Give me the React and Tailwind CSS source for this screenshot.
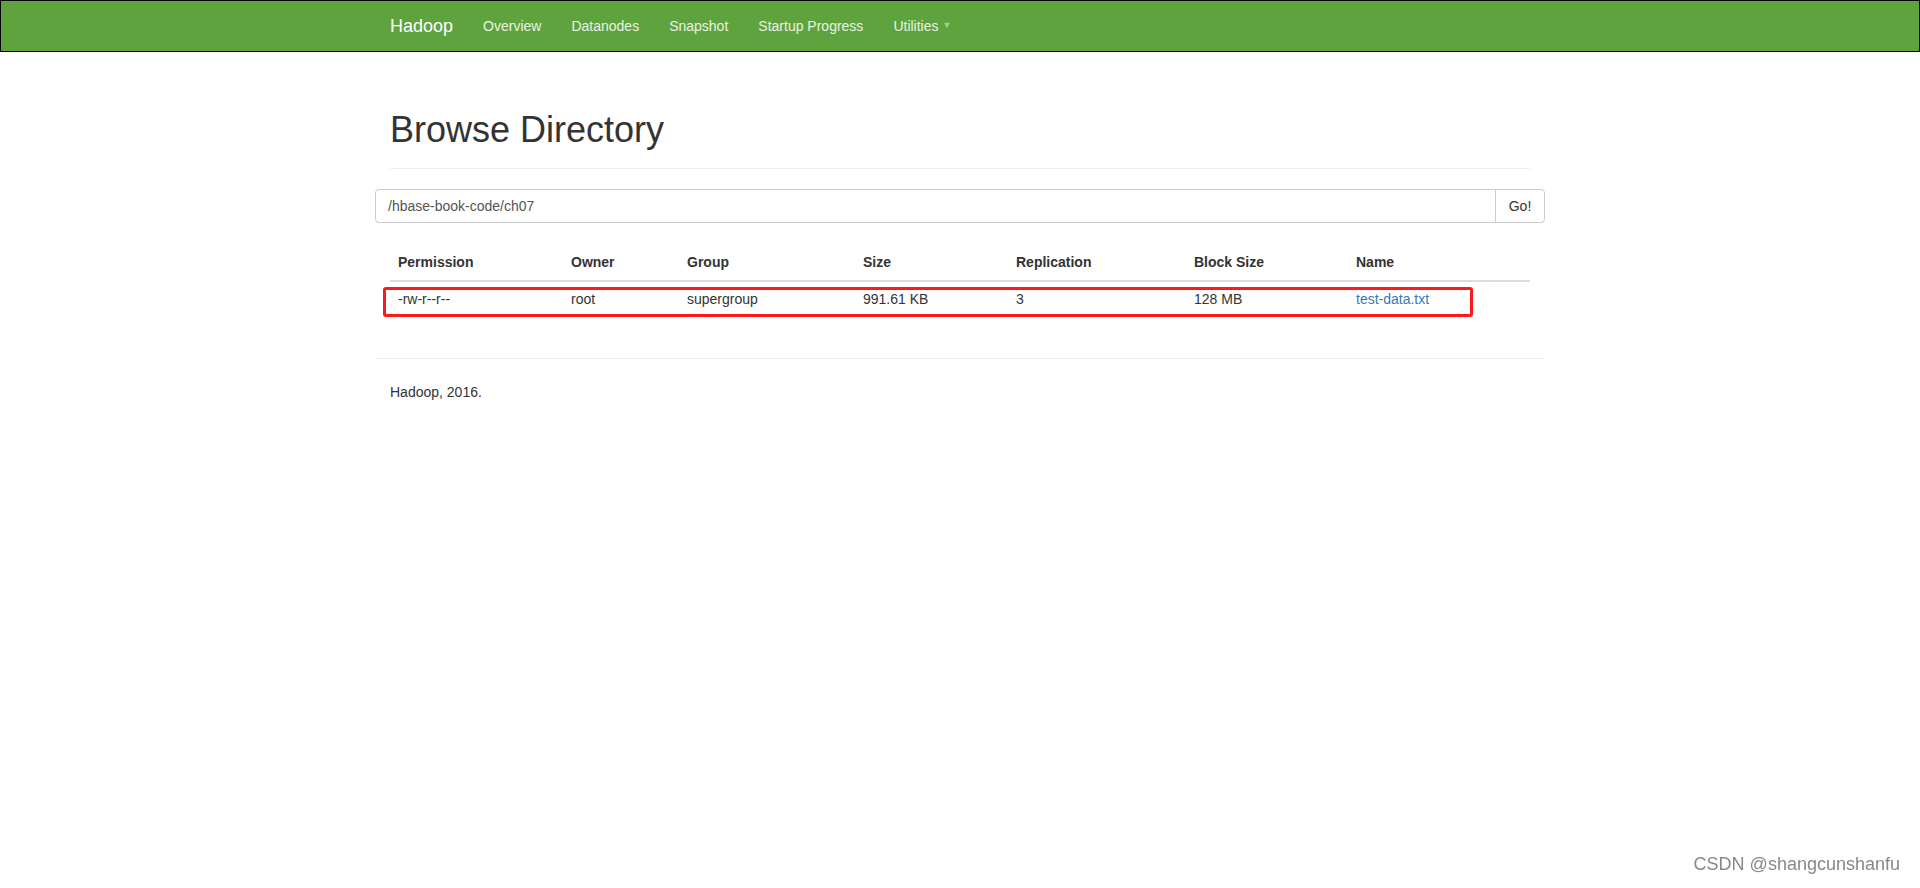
export default function App() {
  const cols = [
    ['Permission', 173, '-rw-r--r--'],
    ['Owner', 116, 'root'],
    ['Group', 176, 'supergroup'],
    ['Size', 153, '991.61 KB'],
    ['Replication', 178, '3'],
    ['Block Size', 162, '128 MB'],
    ['Name', 182, 'test-data.txt'],
  ];
  return (
    <div className="min-h-[888px] bg-white text-[14px] text-[#333]" style={{ fontFamily: '"Liberation Sans", Arial, sans-serif' }}>
      {/* navbar */}
      <div className="h-[52px] bg-[#5fa33e] border border-black">
        <div className="w-[1170px] mx-auto flex items-center h-full px-[15px]">
          <span className="text-[18px] text-white mr-[30px]">Hadoop</span>
          <div className="flex gap-[30px] text-[#e8f3e0]">
            <span>Overview</span>
            <span>Datanodes</span>
            <span>Snapshot</span>
            <span>Startup Progress</span>
            <span className="flex items-center gap-1">Utilities<span className="text-[9px] text-[#a9cf94]">▼</span></span>
          </div>
        </div>
      </div>
      <div className="w-[1170px] mx-auto">
        <div className="px-[15px] pt-[58px]">
          <h1 className="text-[36px] leading-[40px] text-[#333]">Browse Directory</h1>
          <div className="mt-[18px] border-t border-[#eee]" />
        </div>
        <div className="mt-[20px] flex h-[34px] border border-[#ccc] rounded">
          <div className="flex-1 flex items-center px-[12px] text-[#555]">/hbase-book-code/ch07</div>
          <div className="w-[49px] border-l border-[#ccc] flex items-center justify-center">Go!</div>
        </div>
        <div className="px-[15px] mt-[22px]">
          <div className="flex font-bold border-b-2 border-[#ddd] h-[37px] items-center">
            {cols.map(([h, w]) => <div key={h} className="px-[8px]" style={{ width: w }}>{h}</div>)}
          </div>
          <div className="flex h-[34px] items-center relative">
            <div className="absolute left-[-7px] top-[5px] w-[1090px] h-[30px] border-[3px] border-[#ff1a1a] rounded-[3px]" />
            {cols.map(([h, w, v]) => (
              <div key={h} className={`px-[8px] ${h === 'Name' ? 'text-[#337ab7]' : ''}`} style={{ width: w }}>{v}</div>
            ))}
          </div>
        </div>
        <div className="mt-[42px] border-t border-[#eee]" />
        <div className="px-[15px] pt-[23px]">Hadoop, 2016.</div>
      </div>
      <div className="fixed right-[20px] bottom-[10px] text-[18px] text-[#888]">CSDN @shangcunshanfu</div>
    </div>
  );
}
